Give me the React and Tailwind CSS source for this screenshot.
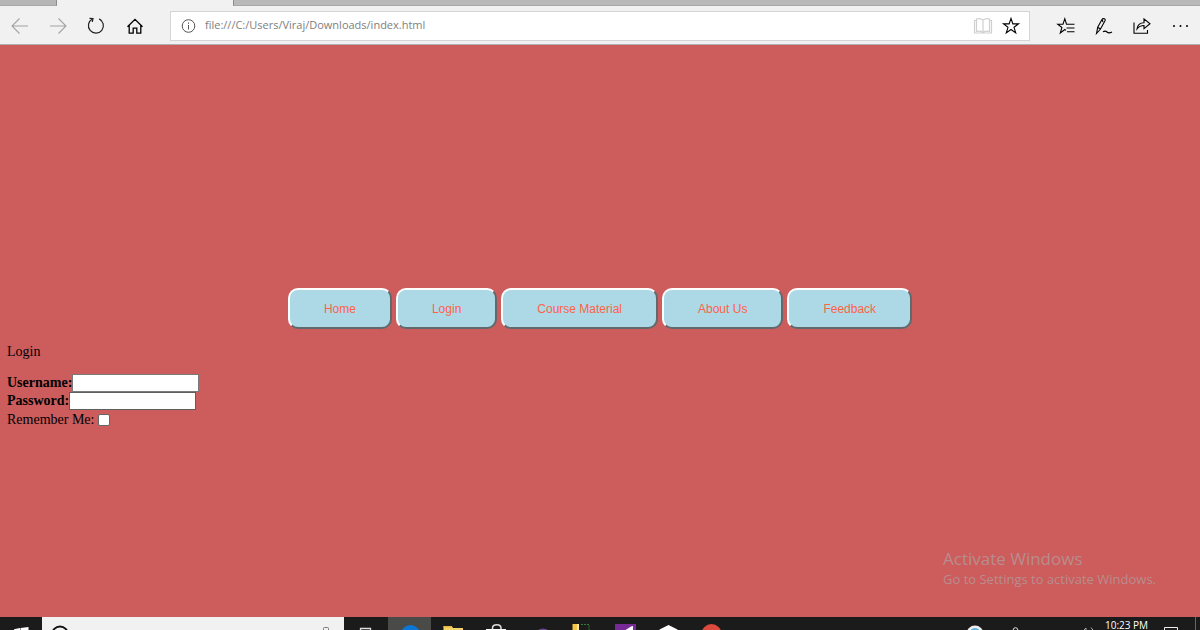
import React, { useState } from 'react';

const NAV_ITEMS = ['Home', 'Login', 'Course Material', 'About Us', 'Feedback'];

function Icon({ children, className = '', width = 1 }) {
  return (
    <svg viewBox="0 0 20 20" className={`w-5 h-5 ${className}`} fill="none" stroke="currentColor" strokeWidth={width} aria-hidden="true">
      {children}
    </svg>
  );
}

function ToolButton({ label, className = 'text-black', children }) {
  return (
    <button type="button" aria-label={label} className={`flex h-7 items-center justify-center shrink-0 ${className}`}>
      {children}
    </button>
  );
}

function BrowserBar() {
  const [url, setUrl] = useState('file:///C:/Users/Viraj/Downloads/index.html');

  return (
    <header className="shrink-0 bg-[#f1f1f1] border-b border-[#b0b0b0]">
      <div className="flex h-1.5">
        <div className="w-[57px] bg-[#b6b6b6] border-r border-b border-[#8c8c8c] border-b-[#a8a8a8]" />
        <div className="w-44" />
        <div className="flex-1 bg-[#b9b9b9] border-l border-b border-[#8c8c8c] border-b-[#a8a8a8]" />
      </div>

      <div className="flex items-center h-[38px] pl-2.5 pr-2.5 pt-px">
        <div className="flex w-40 gap-[18px]">
          <ToolButton label="Back" className="text-[#a3a3a3]">
            <Icon width={1.1}><path d="M18 10H2M9.500 2.500 2 10l7.500 7.500" /></Icon>
          </ToolButton>
          <ToolButton label="Forward" className="text-[#a3a3a3]">
            <Icon width={1.1}><path d="M2 10h16M10.500 2.500 18 10l-7.500 7.500" /></Icon>
          </ToolButton>
          <ToolButton label="Refresh" className="text-[#222]">
            <Icon width={1.2}>
              <path d="M13.200 2.900a7.500 7.500 0 1 1-6.800.1" />
              <path d="M3.500 2.300 7 2.600 6.300 6" />
            </Icon>
          </ToolButton>
          <ToolButton label="Home page">
            <Icon width={1.3}><path d="M3.500 10.800 11 3.300l7.500 7.500M5.200 9.500v7.700h4v-5h3.600v5h4V9.500" /></Icon>
          </ToolButton>
        </div>

        <div className="flex flex-1 items-center h-[30px] bg-white border border-[#d4d4d4] pl-2 pr-2">
          <Icon className="text-[#555]">
            <circle cx="9.500" cy="10" r="6.300" />
            <path d="M9.500 9v4.500M9.500 6.500v1.300" />
          </Icon>
          <input
            type="text"
            aria-label="Address"
            value={url}
            onChange={e => setUrl(e.target.value)}
            className="flex-1 min-w-0 ml-1.5 text-[11px] text-[#808080] outline-none font-['Open_Sans',sans-serif]"
          />
          <ToolButton label="Reading view" className="text-[#cfcfcf]">
            <Icon width={1.2}>
              <path d="M10 4.500v11.500M10 4C8 2.500 5 2.500 3.500 3v12.500c2-.5 4.500-.5 6.500 1 2-1.500 4.500-1.500 6.500-1V3C15 2.500 12 2.500 10 4M3.500 4.500h-2v12.500h17V4.500h-2" />
            </Icon>
          </ToolButton>
          <ToolButton label="Add to favorites" className="text-black ml-2">
            <Icon width={1.1}><path d="m10 2.500 1.900 5.400h5.600l-4.500 3.400 1.700 5.600-4.700-3.400-4.700 3.400L7 11.300 2.500 7.900h5.600z" /></Icon>
          </ToolButton>
        </div>

        <div className="flex w-40 justify-end gap-[18px]">
          <ToolButton label="Favorites">
            <Icon width={1.1}>
              <path d="M11 8.200h-.5L8.800 2.700 7 8.200H1.800l4.100 3.300-1.600 5.500 4.500-3.500 1.200.9M11 8.200h7.500M10.500 12h8M11 15.800h7.500" />
            </Icon>
          </ToolButton>
          <ToolButton label="Add notes">
            <Icon width={1.1}>
              <path d="M2.500 17.500 3.700 11.300 8 3.500c.8-1.500 4-1 3 1.200L6.500 13zM3.700 11.300 6.500 13M8 3.500 9 6M9 15.800c2-1.300 3-.8 4 .2s2.500 1.300 5 0" />
            </Icon>
          </ToolButton>
          <ToolButton label="Share">
            <Icon width={1.1}>
              <path d="M2 6.500v10.800h13.500V14M5 13c.5-4 3-6.300 7-6.300V2.800l6 5-6 4.900V9.500c-3 0-5 .8-7 3.500z" />
            </Icon>
          </ToolButton>
          <ToolButton label="Settings and more">
            <Icon>
              <g fill="currentColor" stroke="none">
                <circle cx="4" cy="10" r="1" />
                <circle cx="10.500" cy="10" r="1" />
                <circle cx="17" cy="10" r="1" />
              </g>
            </Icon>
          </ToolButton>
        </div>
      </div>
    </header>
  );
}

function LoginForm() {
  return (
    <form className="px-[7px] text-[14px] leading-[18px] font-['Liberation_Serif',serif] text-black">
      <p className="mb-[13px]">Login</p>
      <div className="flex items-center">
        <label htmlFor="username" className="font-bold">Username:</label>
        <input id="username" type="text" className="w-[127px] h-[18px] px-0.5 bg-white border border-[#7a7a7a]" />
      </div>
      <div className="flex items-center">
        <label htmlFor="password" className="font-bold">Password:</label>
        <input id="password" type="password" className="w-[127px] h-[18px] px-0.5 bg-white border border-[#5f5f5f]" />
      </div>
      <div className="flex items-center gap-1 h-[19px]">
        <label htmlFor="remember">Remember Me:</label>
        <input id="remember" type="checkbox" className="appearance-none w-3 h-3 bg-white border border-[#666] rounded-xs checked:bg-[#0078d7]" />
      </div>
    </form>
  );
}

// Icons are drawn at the full taskbar height, the window cuts the bar off
function TaskIcon({ label, active, children }) {
  return (
    <button type="button" aria-label={label} className={`w-[43px] h-9 shrink-0 ${active ? 'bg-[#4a4a48]' : ''}`}>
      <svg viewBox="0 0 43 36" className="w-[43px] h-9" aria-hidden="true">{children}</svg>
    </button>
  );
}

function Taskbar() {
  return (
    <footer className="shrink-0 h-[13px] overflow-hidden bg-[#1b1b1b] flex items-start">
      <button type="button" aria-label="Start" className="w-[42px] h-9 shrink-0">
        <svg viewBox="0 0 42 36" className="w-[42px] h-9" fill="#fff" aria-hidden="true">
          <path d="M14 12.200 20 11v8h-6zM20.500 10.900 28.500 10v9h-8zM14 20h6v8l-6-1zM20.500 20h8v9l-8-1z" />
        </svg>
      </button>
      <div className="w-[303px] h-9 shrink-0 bg-[#f1f1f1] border-r border-[#1b1b1b] flex justify-between px-2">
        <svg viewBox="0 0 20 36" className="w-5 h-9" fill="none" stroke="#111" strokeWidth="2" aria-hidden="true">
          <circle cx="10" cy="17.500" r="8" />
        </svg>
        <svg viewBox="0 0 20 36" className="w-5 h-9" fill="none" stroke="#777" aria-hidden="true">
          <rect x="7.500" y="10.500" width="5" height="10" rx="1" />
        </svg>
      </div>
      <TaskIcon label="Task view">
        <path d="M15.500 24V11.500h10V24z" fill="none" stroke="#ddd" strokeWidth="1.300" />
      </TaskIcon>
      <TaskIcon label="Edge" active>
        <circle cx="22.500" cy="17.500" r="9.500" fill="#0b78d7" />
        <circle cx="23" cy="18" r="5" fill="#4a4a48" />
      </TaskIcon>
      <TaskIcon label="File Explorer">
        <path d="M12.500 9h8l1.500 2h10v14h-19.500z" fill="#f5d56b" />
        <path d="M12.500 9h8l1 1.500h-9z" fill="#e5b93a" />
      </TaskIcon>
      <TaskIcon label="Store">
        <path d="M18.500 12.500v-1.500c0-4.500 8.500-4.500 8.500 0v1.500" fill="none" stroke="#ddd" strokeWidth="1.500" />
        <path d="M12 12h20v14H12z" fill="#fff" />
      </TaskIcon>
      <TaskIcon label="Eclipse">
        <circle cx="26" cy="20" r="8.500" fill="#6f4399" />
      </TaskIcon>
      <TaskIcon label="Editor">
        <path d="M12.500 7h4.500v18h-4.500z" fill="#f3c746" />
        <path d="M17 7h2v18h-2z" fill="#fae6ad" />
        <path d="M21 7.500h8V24" fill="none" stroke="#2f7d35" strokeDasharray="2 1" />
      </TaskIcon>
      <TaskIcon label="Visual Studio">
        <path d="M12 7h21v21H12z" fill="#762a96" />
        <path d="m21 14 7-4.500 2-.5v12h-4v-7l-4 3z" fill="#fff" />
      </TaskIcon>
      <TaskIcon label="Unity">
        <path d="m22.500 8 9 4.500v11l-9 4.500-9-4.500v-11z" fill="#fff" />
      </TaskIcon>
      <TaskIcon label="Chrome">
        <circle cx="22.500" cy="17" r="10" fill="#dc4a3d" />
      </TaskIcon>

      <div className="flex flex-1 justify-end">
        <svg viewBox="0 0 140 36" className="w-[140px] h-9 shrink-0" fill="none" aria-hidden="true">
          <circle cx="11" cy="17" r="8.500" fill="#eee" />
          <circle cx="11" cy="17" r="6" fill="#5fb4e0" />
          <circle cx="51.500" cy="13" r="2.300" stroke="#ddd" />
          <path d="M119 14l3-3v9M127 10.500q3 3 3 6" stroke="#aaa" />
        </svg>
        <time className="w-[55px] shrink-0 pl-px text-[10px] leading-4 text-white whitespace-nowrap font-['Open_Sans',sans-serif]">
          10:23 PM
        </time>
        <svg viewBox="0 0 36 36" className="w-9 h-9 shrink-0" fill="none" stroke="#eee" aria-hidden="true">
          <path d="M5.500 24V10.500h13V24z" />
        </svg>
        <div className="w-[5px] h-9 shrink-0 border-l border-[#666]" />
      </div>
    </footer>
  );
}

export default function App() {
  return (
    <div className="flex flex-col h-screen overflow-hidden bg-[#cd5c5c]">
      <BrowserBar />

      <main className="relative flex-1 min-h-0 overflow-hidden pt-[243px]">
        <nav className="flex justify-center gap-1 mb-3.5">
          {NAV_ITEMS.map(item => (
            <button
              key={item}
              type="button"
              className="h-[41px] px-[34px] text-[12px] text-[#ff6347] bg-[#add8e6] rounded-[10px] border-2 border-t-white border-l-white border-r-[#606a6d] border-b-[#606a6d] font-['Liberation_Sans',sans-serif]"
            >
              {item}
            </button>
          ))}
        </nav>

        <LoginForm />

        <div className="absolute right-11 bottom-7 text-[#b88d8d] font-['Open_Sans',sans-serif] whitespace-nowrap pointer-events-none">
          <p className="text-[17px] leading-5">Activate Windows</p>
          <p className="text-[13px] leading-5">Go to Settings to activate Windows.</p>
        </div>
      </main>

      <Taskbar />
    </div>
  );
}
